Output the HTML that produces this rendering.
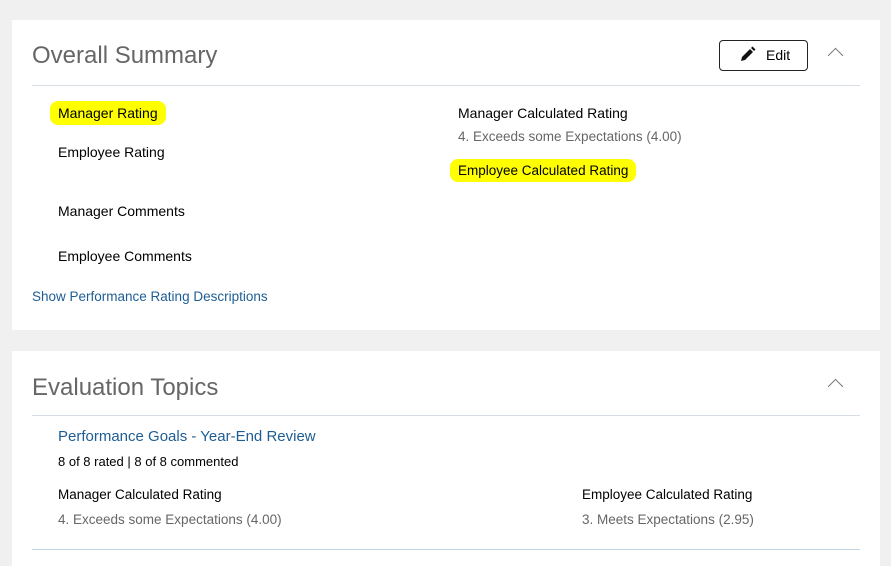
<!DOCTYPE html>
<html><head><style>
body{margin:0;width:891px;height:566px;background:#f0f0f0;font-family:"Segoe UI","Liberation Sans",sans-serif;position:relative;overflow:hidden}
.card{position:absolute;left:12px;width:868px;background:#fff}
.t{position:absolute;white-space:nowrap;font-size:14px;color:#000}
.g{color:#666}
.h{font-size:24px;color:#666;font-weight:300}
.l{color:#1e5d93}
.hl{background:#ffff00;padding:4px 8px;margin-left:-8px;border-radius:8px}
.line{position:absolute;left:32px;width:828px;height:1px;background:#d6dde4}
.chev{position:absolute;width:10px;height:10px;border-left:1.5px solid #777;border-top:1.5px solid #777;transform:rotate(45deg)}
</style></head><body>
<div class="card" style="top:20px;height:310px"></div>
<div class="card" style="top:351px;height:215px"></div>
<div class="t h" style="left:32px;top:42px">Overall Summary</div>
<div style="position:absolute;left:719px;top:40px;width:87px;height:29px;border:1px solid #222;border-radius:4px"></div>
<svg style="position:absolute;left:740px;top:46px" width="16" height="16" viewBox="0 0 16 16"><path d="M1 15 L2 11 L10 3 L13 6 L5 14 Z" fill="#111"/><path d="M11 2 L12.5 0.5 L15.5 3.5 L14 5 Z" fill="#111"/></svg>
<div class="t" style="left:766px;top:47px">Edit</div>
<div class="chev" style="left:830px;top:50px"></div>
<div class="line" style="top:85px"></div>
<div class="t" style="left:58px;top:105px"><span class="hl">Manager Rating</span></div>
<div class="t" style="left:58px;top:144px">Employee Rating</div>
<div class="t" style="left:58px;top:203px">Manager Comments</div>
<div class="t" style="left:58px;top:248px">Employee Comments</div>
<div class="t l" style="left:32px;top:289px;font-size:13.5px">Show Performance Rating Descriptions</div>
<div class="t" style="left:458px;top:105px">Manager Calculated Rating</div>
<div class="t g" style="left:458px;top:129px;font-size:13.5px">4. Exceeds some Expectations (4.00)</div>
<div class="t" style="left:458px;top:163px;font-size:13.5px"><span class="hl">Employee Calculated Rating</span></div>
<div class="t h" style="left:32px;top:374px">Evaluation Topics</div>
<div class="chev" style="left:830px;top:381px"></div>
<div class="line" style="top:415px"></div>
<div class="t l" style="left:58px;top:428px;font-size:15px">Performance Goals - Year-End Review</div>
<div class="t" style="left:58px;top:454px;font-size:13px">8 of 8 rated | 8 of 8 commented</div>
<div class="t" style="left:58px;top:487px;font-size:13.5px">Manager Calculated Rating</div>
<div class="t g" style="left:58px;top:512px;font-size:13.5px">4. Exceeds some Expectations (4.00)</div>
<div class="t" style="left:582px;top:487px;font-size:13.5px">Employee Calculated Rating</div>
<div class="t g" style="left:582px;top:512px;font-size:13.5px">3. Meets Expectations (2.95)</div>
<div class="line" style="top:549px;background:#c2d6e8"></div>
</body></html>
